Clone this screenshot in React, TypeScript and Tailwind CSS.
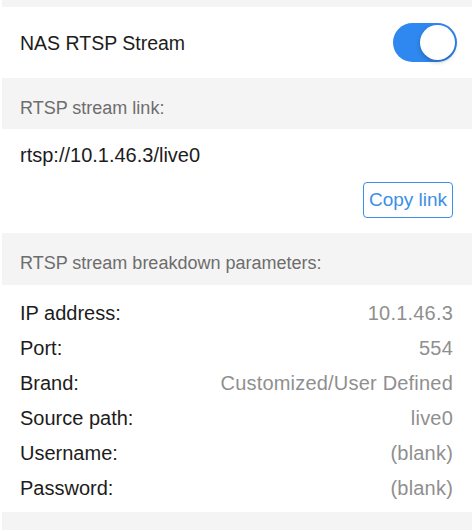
import React from 'react';

const params = [
  { label: 'IP address:', value: '10.1.46.3' },
  { label: 'Port:', value: '554' },
  { label: 'Brand:', value: 'Customized/User Defined' },
  { label: 'Source path:', value: 'live0' },
  { label: 'Username:', value: '(blank)' },
  { label: 'Password:', value: '(blank)' },
];

function Toggle() {
  return (
    <div className="relative h-[39px] w-[64px] rounded-full bg-[#2f88ef]">
      <div className="absolute right-[2px] top-[2px] h-[35px] w-[35px] rounded-full bg-white shadow-[0_2px_4px_rgba(0,0,0,0.25)]" />
    </div>
  );
}

export default function App() {
  return (
    <div className="flex h-[530px] w-[474px] flex-col overflow-hidden bg-white font-['Liberation_Sans',Arial,sans-serif] text-[#1c1c1c]">
      <div className="mx-[2px] h-[7px] bg-[#f4f4f4]" />

      <div className="flex h-[71px] items-center justify-between pl-5 pr-[17px]">
        <span className="text-[19.5px] leading-6">NAS RTSP Stream</span>
        <Toggle />
      </div>

      <div className="mx-[2px] h-[51px] bg-[#f4f4f4] px-[18px] pt-[19px]">
        <span className="text-[18px] leading-[21px] text-[#6d6d6d]">RTSP stream link:</span>
      </div>

      <div className="flex h-[104px] flex-col px-5 pt-[14px]">
        <span className="text-[20px] leading-6">rtsp://10.1.46.3/live0</span>
        <div className="mt-[15px] flex justify-end pr-px">
          <button className="h-[36px] w-[90px] rounded-[4px] border border-[#3b8fe8] text-[19px] text-[#3b8fe8]">
            Copy link
          </button>
        </div>
      </div>

      <div className="mx-[2px] h-[52px] bg-[#f4f4f4] px-[18px] pt-[19px]">
        <span className="text-[18px] leading-[21px] text-[#6d6d6d]">
          RTSP stream breakdown parameters:
        </span>
      </div>

      <div className="h-[227px] pl-5 pr-[21px] pt-[10px]">
        {params.map((p) => (
          <div key={p.label} className="flex h-[35px] items-center justify-between text-[20px]">
            <span>{p.label}</span>
            <span className="text-[#8f8f8f] tracking-[0.2px]">{p.value}</span>
          </div>
        ))}
      </div>

      <div className="mx-[2px] flex-1 bg-[#f4f4f4]" />
    </div>
  );
}
